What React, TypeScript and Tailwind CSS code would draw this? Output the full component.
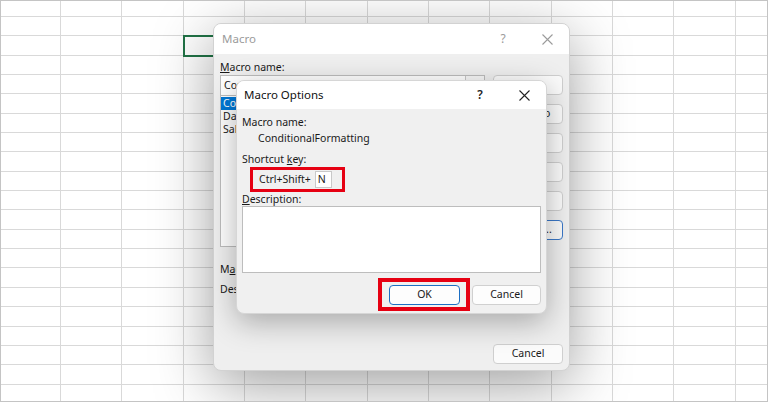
const ROWS = 21;
const COLS = 13;

function XIcon({ color }: { color: string }) {
  return (
    <svg width="11" height="11" viewBox="0 0 11 11">
      <path d="M0.5 0.5 L10.5 10.5 M10.5 0.5 L0.5 10.5" stroke={color} strokeWidth="1.1" />
    </svg>
  );
}

function SideButton({ label, active }: { label: string; active?: boolean }) {
  return (
    <div
      className={`h-[20px] flex items-center justify-center rounded-[4px] bg-[#fbfbfb] border text-[10.5px] text-[#1a1a1a] ${
        active ? "border-[#3b78c8]" : "border-[#cfcfcf]"
      }`}
    >
      {label}
    </div>
  );
}

function Sheet() {
  const cells = [];
  for (let r = 0; r < ROWS; r++) {
    for (let c = 0; c < COLS; c++) {
      const selected = r === 2 && c === 3;
      cells.push(
        <div
          key={`${r}-${c}`}
          className={`border-r border-b border-[#d9d9d9] ${
            selected ? "outline-2 outline-[#217346] -outline-offset-1 z-[1]" : ""
          }`}
        />
      );
    }
  }
  return (
    <div className="grid grid-cols-[60px_repeat(12,61.33px)] grid-rows-[16px_repeat(20,19.35px)]">
      {cells}
    </div>
  );
}

function MacroDialog() {
  return (
    <div className="absolute left-[212px] top-[22px] w-[357px] h-[348px] rounded-[8px] bg-[#efefef] border border-[#d2d2d2] shadow-[0_14px_60px_rgba(0,0,0,0.38)] flex flex-col overflow-hidden z-[2]">
      {/* title bar */}
      <div className="h-[30px] bg-white flex items-center justify-between shrink-0">
        <span className="pl-[8px] text-[11.5px] text-[#9b9b9b]">Macro</span>
        <div className="flex h-full">
          <div className="w-[44px] flex items-center justify-center text-[12px] text-[#9b9b9b]">?</div>
          <div className="w-[44px] flex items-center justify-center">
            <XIcon color="#9b9b9b" />
          </div>
        </div>
      </div>

      {/* body */}
      <div className="flex-1 flex gap-[8px] px-[6px] pt-[5px] pb-[6px]">
        <div className="flex-1 flex flex-col">
          <div className="h-[16px] leading-[16px] text-[10.5px] text-[#1a1a1a]">
            <span className="underline">M</span>acro name:
          </div>
          <div className="h-[20px] flex bg-white border border-[#bdbdbd] border-b-0">
            <div className="flex-1 pl-[3px] leading-[18px] text-[10.5px] text-[#1a1a1a]">ConditionalFormatting</div>
            <div className="w-[19px] border-l border-[#c8c8c8] bg-[#f7f7f7]" />
          </div>
          <div className="h-[152px] bg-white border border-[#bdbdbd] flex flex-col pt-[1px] text-[10.5px] leading-[13px] text-[#1a1a1a]">
            <div className="bg-[#0078d7] text-white pl-[2px]">ConditionalFormatting</div>
            <div className="pl-[2px]">DataValidation</div>
            <div className="pl-[2px]">SalesReport</div>
          </div>
          <div className="mt-[14px] h-[16px] leading-[16px] text-[10.5px] text-[#1a1a1a]">
            M<span className="underline">a</span>cros in:
          </div>
          <div className="mt-[4px] h-[16px] leading-[16px] text-[10.5px] text-[#1a1a1a]">Description</div>
        </div>
        <div className="w-[70px] flex flex-col pt-[16px]">
          <div className="flex flex-col gap-[9px]">
            <SideButton label="Run" />
            <SideButton label="Step Into" />
            <SideButton label="Edit" />
            <SideButton label="Create" />
            <SideButton label="Delete" />
            <SideButton label="Options..." active />
          </div>
          <div className="mt-auto">
            <SideButton label="Cancel" />
          </div>
        </div>
      </div>
    </div>
  );
}

function OptionsDialog() {
  return (
    <div className="absolute left-[235px] top-[79px] w-[311px] h-[234px] rounded-[8px] bg-[#f0f0f0] border border-[#d6d6d6] shadow-[0_8px_30px_rgba(0,0,0,0.3)] flex flex-col overflow-hidden z-[3]">
      <div className="h-[28px] bg-white flex items-center justify-between shrink-0">
        <span className="pl-[7px] text-[11.5px] text-[#111]">Macro Options</span>
        <div className="flex h-full">
          <div className="w-[44px] flex items-center justify-center text-[12px] font-semibold text-[#222]">?</div>
          <div className="w-[44px] flex items-center justify-center">
            <XIcon color="#222" />
          </div>
        </div>
      </div>

      <div className="flex-1 flex flex-col px-[5px] pt-[5px] pb-[3px] text-[10.5px] text-[#1a1a1a]">
        <div className="h-[16px] leading-[16px]">Macro name:</div>
        <div className="h-[16px] leading-[16px] pl-[16px]">ConditionalFormatting</div>
        <div className="mt-[6px] h-[15px] leading-[15px]">
          Shortcut <span className="underline">k</span>ey:
        </div>
        <div className="ml-[8px] w-[95px] h-[25px] border-[3px] border-[#e60012] flex items-center pl-[6px]">
          <span>Ctrl+Shift+</span>
          <div className="ml-[4px] w-[17px] h-[17px] bg-white border border-[#c9c9c9] flex items-center pl-[2px] leading-none">
            N
          </div>
        </div>
        <div className="h-[14px] leading-[14px]">
          <span className="underline">D</span>escription:
        </div>
        <div className="h-[67px] bg-white border border-[#bdbdbd]" />
        <div className="mt-[5px] flex justify-end items-center gap-[2px]">
          <div className="w-[92px] h-[33px] border-4 border-[#e60012] flex items-center pl-[7px]">
            <div className="w-[71px] h-[20px] rounded-[4px] bg-[#fdfdfd] border border-[#1c6fc4] flex items-center justify-center">
              OK
            </div>
          </div>
          <div className="w-[69px] h-[20px] rounded-[4px] bg-[#fdfdfd] border border-[#d0d0d0] flex items-center justify-center">
            Cancel
          </div>
        </div>
      </div>
    </div>
  );
}

export default function App() {
  return (
    <div className="w-[768px] h-[402px] bg-white border border-[#c4c4c4] overflow-hidden relative font-['Noto_Sans',sans-serif]">
      <Sheet />
      <MacroDialog />
      <OptionsDialog />
    </div>
  );
}
